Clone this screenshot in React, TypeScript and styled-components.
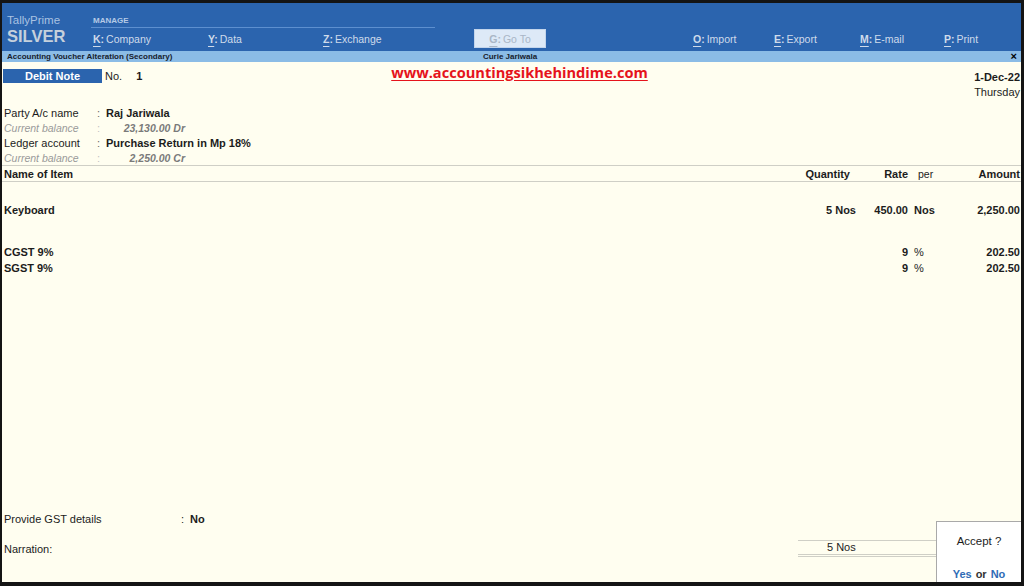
import { createGlobalStyle, styled } from 'styled-components';

const GlobalStyle = createGlobalStyle`
  html, body {
    margin: 0;
    padding: 0;
    overflow: hidden;
    background: #141414;
  }
  * {
    box-sizing: border-box;
  }
`;

type MenuEntry = { key: string; label: string; w: number };

const leftMenu: MenuEntry[] = [
  { key: 'K', label: 'Company', w: 115 },
  { key: 'Y', label: 'Data', w: 115 },
  { key: 'Z', label: 'Exchange', w: 151 },
];

const rightMenu: MenuEntry[] = [
  { key: 'O', label: 'Import', w: 81 },
  { key: 'E', label: 'Export', w: 86 },
  { key: 'M', label: 'E-mail', w: 84 },
  { key: 'P', label: 'Print', w: 70 },
];

// gap = space left below the row
const items = [
  { name: 'Keyboard', qty: '5 Nos', rate: '450.00', per: 'Nos', amount: '2,250.00', gap: 26 },
  { name: 'CGST 9%', qty: '', rate: '9', per: '%', amount: '202.50', gap: 0 },
  { name: 'SGST 9%', qty: '', rate: '9', per: '%', amount: '202.50', gap: 0 },
];

const App = () => {
  return (
    <>
      <GlobalStyle />
      <Frame>
        <Header>
          <Brand>
            <BrandName>TallyPrime</BrandName>
            <Edition>SILVER</Edition>
          </Brand>
          <Menu>
            <Group>MANAGE</Group>
            <Nav>
              {leftMenu.map((m) => (
                <MenuItem key={m.key} $w={m.w}>
                  <Key>{m.key}</Key>
                  <Colon>:</Colon>
                  {m.label}
                </MenuItem>
              ))}
              <GoTo>
                <Key>G</Key>
                <Colon>:</Colon>Go To
              </GoTo>
              {rightMenu.map((m) => (
                <MenuItem key={m.key} $w={m.w}>
                  <Key>{m.key}</Key>
                  <Colon>:</Colon>
                  {m.label}
                </MenuItem>
              ))}
            </Nav>
          </Menu>
        </Header>

        <SubBar>
          <span>Accounting Voucher Alteration (Secondary)</span>
          <SubCenter>Curie Jariwala</SubCenter>
          <Close>×</Close>
        </SubBar>

        <Body>
          <TopRow>
            <VoucherInfo>
              <VoucherType>Debit Note</VoucherType>
              <NoLabel>No.</NoLabel>
              <Strong>1</Strong>
            </VoucherInfo>
            <Site>www.accountingsikhehindime.com</Site>
            <DateBlock>
              <Strong>1-Dec-22</Strong>
              <span>Thursday</span>
            </DateBlock>
          </TopRow>

          <Ledger>
            <Label>Party A/c name</Label>
            <Sep>:</Sep>
            <Value>Raj Jariwala</Value>

            <Label $sub>Current balance</Label>
            <Sep $sub>:</Sep>
            <Balance>23,130.00 Dr</Balance>

            <Label>Ledger account</Label>
            <Sep>:</Sep>
            <Value>Purchase Return in Mp 18%</Value>

            <Label $sub>Current balance</Label>
            <Sep $sub>:</Sep>
            <Balance>2,250.00 Cr</Balance>
          </Ledger>

          <TableHead>
            <HeadCell>Name of Item</HeadCell>
            <HeadCell $align="right" $pr={6}>Quantity</HeadCell>
            <HeadCell $align="right">Rate</HeadCell>
            <HeadCell $pl={10} $light>per</HeadCell>
            <HeadCell $align="right" $pr={1}>Amount</HeadCell>
          </TableHead>

          <ItemList>
            {items.map((it) => (
              <ItemRow key={it.name} $gap={it.gap}>
                <Cell>{it.name}</Cell>
                <Cell $align="right">{it.qty}</Cell>
                <Cell $align="right">{it.rate}</Cell>
                <Cell $pl={6} $light={it.per === '%'}>{it.per}</Cell>
                <Cell $align="right" $pr={1}>{it.amount}</Cell>
              </ItemRow>
            ))}
          </ItemList>

          <Footer>
            <GstRow>
              <span>Provide GST details</span>
              <span>:</span>
              <Strong>No</Strong>
            </GstRow>
            <NarrationRow>
              <span>Narration:</span>
              <TotalQty>5 Nos</TotalQty>
              <span />
            </NarrationRow>
          </Footer>

          <AcceptBox>
            <AcceptTitle>Accept ?</AcceptTitle>
            <AcceptActions>
              <Choice>Yes</Choice>
              <Or>or</Or>
              <Choice>No</Choice>
            </AcceptActions>
          </AcceptBox>
        </Body>
      </Frame>
    </>
  );
};

export default App;

const Frame = styled.div`
  width: 1024px;
  height: 586px;
  display: flex;
  flex-direction: column;
  border-style: solid;
  border-color: #141414;
  border-width: 3px 3px 4px 2px;
  background: #fffef0;
  font-family: 'Liberation Sans', Arial, sans-serif;
  font-size: 11px;
  color: #1c1c1c;
`;

const Header = styled.div`
  height: 48px;
  flex-shrink: 0;
  display: flex;
  background: #2b64ae;
`;

const Brand = styled.div`
  width: 89px;
  padding: 10px 0 0 5px;
  display: flex;
  flex-direction: column;
`;

const BrandName = styled.div`
  font-size: 11.5px;
  line-height: 14px;
  color: #a9c2e2;
`;

const Edition = styled.div`
  font-size: 16.5px;
  line-height: 18px;
  font-weight: 700;
  color: #c5d0dc;
`;

const Menu = styled.div`
  flex: 1;
  display: flex;
  flex-direction: column;
  padding-top: 13px;
`;

const Group = styled.div`
  width: 344px;
  padding: 0 0 1px 2px;
  border-bottom: 1px solid #5d8fcf;
  font-size: 8px;
  line-height: 10px;
  font-weight: 700;
  color: #b5cae6;
`;

const Nav = styled.div`
  margin-top: 1px;
  height: 19px;
  display: flex;
  align-items: center;
  padding-left: 2px;
`;

const MenuItem = styled.div<{ $w: number }>`
  width: ${(p) => p.$w}px;
  flex-shrink: 0;
  font-size: 10.5px;
  color: #cfdbeb;
  white-space: nowrap;
`;

const Key = styled.span`
  font-weight: 700;
  text-decoration: underline;
  text-underline-offset: 3px;
`;

const Colon = styled.span`
  font-weight: 700;
  margin-right: 2px;
`;

const GoTo = styled.div`
  width: 72px;
  height: 19px;
  margin-right: 147px;
  flex-shrink: 0;
  display: flex;
  align-items: center;
  justify-content: center;
  background: #dde9f7;
  border: 1px solid #c3d5ec;
  font-size: 10.5px;
  color: #a9b6c6;
`;

const SubBar = styled.div`
  height: 11px;
  flex-shrink: 0;
  display: grid;
  grid-template-columns: 1fr auto 1fr;
  align-items: center;
  padding: 0 4px 0 5px;
  background: #8bbce6;
  font-size: 8px;
  line-height: 11px;
  font-weight: 700;
  color: #16202c;
`;

const SubCenter = styled.span`
  padding-right: 4px;
`;

const Close = styled.span`
  justify-self: end;
  font-size: 11px;
  color: #000;
`;

const Body = styled.div`
  position: relative;
  flex: 1;
  display: flex;
  flex-direction: column;
`;

const TopRow = styled.div`
  display: grid;
  grid-template-columns: 1fr auto 1fr;
  align-items: start;
  padding: 7px 1px 0 1px;
`;

const VoucherInfo = styled.div`
  display: flex;
  align-items: center;
  height: 14px;
`;

const VoucherType = styled.div`
  width: 99px;
  height: 14px;
  line-height: 14px;
  background: #2b64ae;
  color: #fff;
  font-weight: 700;
  text-align: center;
`;

const NoLabel = styled.span`
  margin: 0 14px 0 3px;
`;

const Strong = styled.span`
  font-weight: 700;
`;

const Site = styled.div`
  margin-top: -6px;
  padding-left: 16px;
  font-family: 'Open Sans', 'Noto Sans', sans-serif;
  font-size: 14.6px;
  line-height: 18px;
  font-weight: 700;
  color: #e5131b;
  text-decoration: underline;
  text-underline-offset: 2px;
`;

const DateBlock = styled.div`
  margin-top: 1px;
  justify-self: end;
  display: flex;
  flex-direction: column;
  align-items: flex-end;
  line-height: 15px;
`;

const Ledger = styled.div`
  margin-top: 5px;
  display: grid;
  grid-template-columns: 93px 8px 80px 1fr;
  grid-auto-rows: 15px;
  align-items: center;
  padding-left: 2px;
`;

const Label = styled.span<{ $sub?: boolean }>`
  grid-column: 1;
  font-style: ${(p) => (p.$sub ? 'italic' : 'normal')};
  color: ${(p) => (p.$sub ? '#9a9a9a' : '#1c1c1c')};
  font-size: ${(p) => (p.$sub ? '10.5px' : '11px')};
  white-space: nowrap;
`;

const Sep = styled.span<{ $sub?: boolean }>`
  grid-column: 2;
  color: ${(p) => (p.$sub ? '#c2c2c2' : '#6a6a6a')};
`;

const Value = styled.span`
  grid-column: 3 / 5;
  padding-left: 1px;
  font-weight: 700;
  font-size: 11px;
`;

const Balance = styled.span`
  grid-column: 3;
  text-align: right;
  font-style: italic;
  font-weight: 700;
  font-size: 10.5px;
  color: #7a7a7a;
`;

const columns = '1fr 86px 52px 56px 57px';

const TableHead = styled.div`
  display: grid;
  grid-template-columns: ${columns};
  height: 17px;
  align-items: center;
  border-top: 1px solid #cfcfc6;
  border-bottom: 1px solid #cfcfc6;
`;

const HeadCell = styled.span<{ $align?: string; $pl?: number; $pr?: number; $light?: boolean }>`
  text-align: ${(p) => p.$align ?? 'left'};
  padding-left: ${(p) => p.$pl ?? 2}px;
  padding-right: ${(p) => p.$pr ?? 0}px;
  font-weight: ${(p) => (p.$light ? 400 : 700)};
  font-size: ${(p) => (p.$light ? '10.5px' : '11px')};
`;

const ItemList = styled.div`
  margin-top: 20px;
  display: flex;
  flex-direction: column;
`;

const ItemRow = styled.div<{ $gap: number }>`
  display: grid;
  grid-template-columns: ${columns};
  height: 16px;
  align-items: center;
  margin-bottom: ${(p) => p.$gap}px;
`;

const Cell = styled.span<{ $align?: string; $pl?: number; $pr?: number; $light?: boolean }>`
  text-align: ${(p) => p.$align ?? 'left'};
  padding-left: ${(p) => p.$pl ?? 2}px;
  padding-right: ${(p) => p.$pr ?? 0}px;
  font-weight: ${(p) => (p.$light ? 400 : 700)};
  white-space: nowrap;
`;

const Footer = styled.div`
  margin-top: auto;
  padding-bottom: 25px;
  display: flex;
  flex-direction: column;
`;

const GstRow = styled.div`
  display: grid;
  grid-template-columns: 177px 9px 1fr;
  height: 16px;
  align-items: center;
  padding-left: 2px;
  margin-bottom: 13px;
`;

const NarrationRow = styled.div`
  display: grid;
  grid-template-columns: 1fr 139px 84px;
  align-items: center;
  padding-left: 2px;
`;

const TotalQty = styled.div`
  height: 17px;
  line-height: 13px;
  padding-left: 29px;
  border-top: 1px solid #cfcfc6;
  border-bottom: 3px double #cfcfc6;
`;

const AcceptBox = styled.div`
  position: absolute;
  right: 0;
  bottom: 0;
  width: 85px;
  height: 61px;
  display: flex;
  flex-direction: column;
  align-items: center;
  background: #ffffff;
  border: 1px solid #a9a9a9;
  border-right: none;
  border-bottom: none;
`;

const AcceptTitle = styled.div`
  margin-top: 11px;
  font-size: 11.5px;
  line-height: 16px;
  color: #1c1c1c;
`;

const AcceptActions = styled.div`
  margin-top: auto;
  margin-bottom: 1px;
  display: flex;
  gap: 4px;
  line-height: 14px;
`;

const Choice = styled.span`
  font-weight: 700;
  color: #2f6cb6;
`;

const Or = styled.span`
  font-weight: 700;
  color: #333;
`;
